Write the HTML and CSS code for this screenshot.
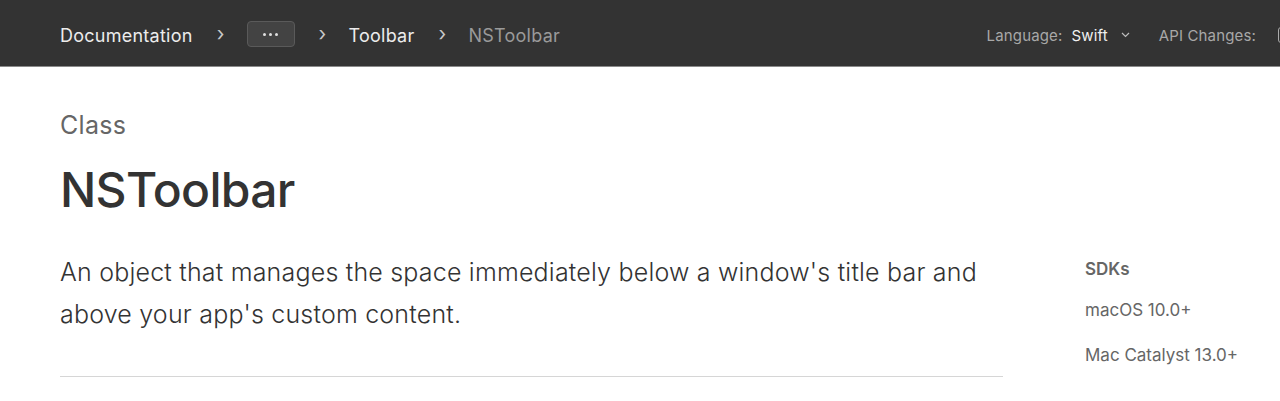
FILE: index.html
```html
<!DOCTYPE html>
<html>
<head>
<meta charset="utf-8">
<link rel="stylesheet" href="styles.css">
</head>
<body>
<nav class="nav">
  <div class="crumbs">
    <span class="crumb">Documentation</span>
    <span class="sep">›</span>
    <span class="more"><span class="dot"></span><span class="dot"></span><span class="dot"></span></span>
    <span class="sep">›</span>
    <span class="crumb">Toolbar</span>
    <span class="sep">›</span>
    <span class="crumb current">NSToolbar</span>
  </div>
  <div class="opts">
    <span class="opt-label">Language:</span>
    <span class="opt-value">Swift</span>
    <svg class="chev" width="9" height="6" viewBox="0 0 9 6"><path d="M1 1 L4.5 4.5 L8 1" fill="none" stroke="#bdbdbd" stroke-width="1.2"/></svg>
    <span class="opt-label api">API Changes:</span>
    <span class="toggle"></span>
  </div>
</nav>
<main class="page">
  <section class="intro">
    <div class="eyebrow">Class</div>
    <h1 class="title">NSToolbar</h1>
    <div class="row">
      <div class="left">
        <p class="abstract">An object that manages the space immediately below a window's title bar and above your app's custom content.</p>
        <hr class="rule">
      </div>
      <aside class="summary">
        <div class="sum-title">SDKs</div>
        <div class="sum-item">macOS 10.0+</div>
        <div class="sum-item">Mac Catalyst 13.0+</div>
      </aside>
    </div>
  </section>
</main>
</body>
</html>
```

FILE: styles.css
```css
* { box-sizing: border-box; }
html, body { margin: 0; padding: 0; background: #fff; }
body { font-family: Inter, "Noto Sans", "Liberation Sans", sans-serif; overflow: hidden; }

.nav {
  height: 67px;
  background: #333333;
  border-bottom: 1px solid #8a8a8a;
  display: flex;
  align-items: center;
  justify-content: space-between;
  padding: 4px 0 0 60px;
  color: #e8e8e8;
}
.crumbs { display: flex; align-items: center; font-size: 18px; letter-spacing: 0.25px; }
.crumb { color: #ececec; }
.crumb.current { color: #9a9a9a; }
.sep { color: #c8c8c8; font-size: 20px; margin: 0 22px 0 24px; position: relative; top: -1px; }
.more {
  width: 48px; height: 26px;
  border: 1px solid #5a5a5a;
  border-radius: 4px;
  background: #434343;
  display: flex; align-items: center; justify-content: center; gap: 3px;
  position: relative; top: -1px;
}
.dot { width: 3px; height: 3px; border-radius: 50%; background: #e0e0e0; }

.opts { display: flex; align-items: center; font-size: 15px; letter-spacing: 0.15px; white-space: nowrap; }
.opt-label { color: #a8a8a8; }
.opt-value { color: #f0f0f0; margin-left: 9px; }
.chev { margin-left: 13px; }
.api { margin-left: 29px; }
.toggle {
  width: 20px; height: 16px; margin-left: 22px; margin-right: -18px;
  border: 1px solid #aaa; border-radius: 3px;
}

.page { padding: 0 0 0 60px; }
.eyebrow { font-size: 25px; letter-spacing: 0.3px; color: #666; margin-top: 43px; line-height: 30px; font-weight: 400; }
.title { font-size: 48px; font-weight: 500; color: #333; margin: 21px 0 0; line-height: 58px; letter-spacing: -0.7px; }
.row { display: flex; margin-top: 32px; }
.left { width: 943px; flex: none; }
.abstract { margin: 0; font-size: 25px; letter-spacing: 0.2px; font-weight: 300; color: #333; line-height: 42px; }
.rule { border: 0; border-top: 1px solid #d6d6d6; margin: 41px 0 0; }
.summary { margin-left: 82px; color: #666; font-size: 17px; padding-top: 8px; white-space: nowrap; line-height: 20px; }
.sum-title { font-weight: 600; margin-bottom: 21px; }
.sum-item { margin-bottom: 25px; }
```
